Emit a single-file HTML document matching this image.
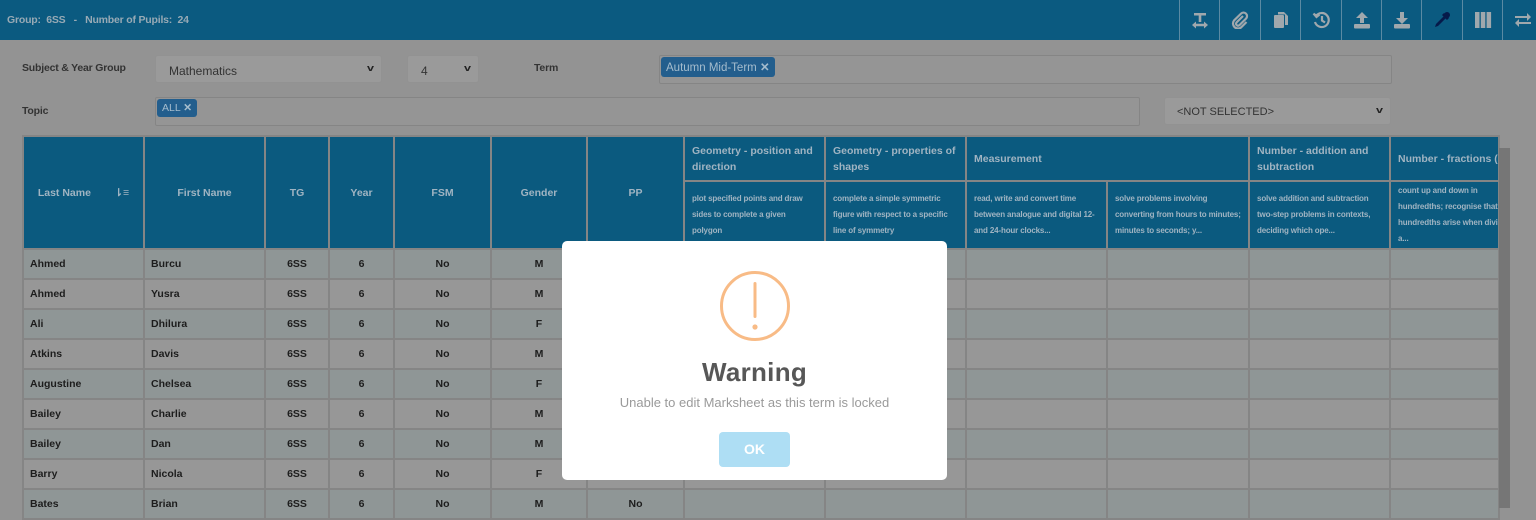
<!DOCTYPE html>
<html><head><meta charset="utf-8"><style>
*{box-sizing:border-box;margin:0;padding:0}
body{width:1536px;height:508px;overflow:hidden;background:#939393;font-family:"Liberation Sans",sans-serif;position:relative}
.top{position:absolute;left:0;top:0;width:1536px;height:40px;background:#0b5a80}
.top .t{position:absolute;left:7px;top:14px;font-size:10.5px;font-weight:bold;color:#98aab5;letter-spacing:-.2px}
.btn{position:absolute;top:0;width:40px;height:40px;border-left:1px solid #5b8aa3}
.btn svg{position:absolute;left:11px;top:11px}
.lbl{position:absolute;font-size:10.5px;font-weight:bold;color:#333;letter-spacing:-.2px}
.sel{position:absolute;background:#9a9a9a;border-radius:3px;font-size:12px;color:#333;padding:8px 13px;border:1px solid #929292}
.sel .ch{position:absolute;right:8px;top:7px;font-size:9px;color:#222;font-weight:bold;transform:scaleX(1.4)}
.inp{position:absolute;background:#959595;border:1px solid #858585;border-radius:2px}
.chip{position:absolute;background:#235e8d;color:#a5bccd;font-size:11.5px;border-radius:3px;padding:3px 5px}
table{position:absolute;left:22px;top:135px;border-collapse:collapse;table-layout:fixed;width:1476px}
td,th{border:2px solid #858585;overflow:hidden;white-space:nowrap}
th{background:#0b5a7f;color:#a0b4c2;font-size:10.5px;font-weight:bold}
th.l{text-align:left;padding:0 7px;white-space:normal;line-height:16px;vertical-align:middle}
th.s{font-size:8px;letter-spacing:-.15px;line-height:16px;font-weight:bold;text-align:left;padding:0 7px;white-space:normal}
td{height:30px;font-size:10.5px;font-weight:bold;color:#1d1d1d;text-align:center}
td.a{text-align:left;padding-left:6px}
tr.o td{background:#8f9696}tr.e td{background:#979797}
.sb{position:absolute;left:1499px;top:148px;width:11px;height:360px;background:#767676}
.modal{position:absolute;left:562px;top:241px;width:385px;height:239px;background:#fff;border-radius:5px;text-align:center}
</style></head><body>
<div class="top"><div class="t">Group:&nbsp;&nbsp;6SS&nbsp;&nbsp;&nbsp;-&nbsp;&nbsp;&nbsp;Number of Pupils:&nbsp;&nbsp;24</div>
<div class="btn" style="left:1179px"><svg width="18" height="18" viewBox="0 0 18 18" fill="#a0a8ad"><rect x="3" y="2" width="12" height="2.5"/><rect x="7.7" y="2" width="2.6" height="9"/><path d="M1 14 L5 10.5 V12.8 H13 V10.5 L17 14 L13 17.5 V15.2 H5 V17.5Z"/></svg></div>
<div class="btn" style="left:1219px"><svg width="18" height="18" viewBox="0 0 18 18" fill="none" stroke="#a0a8ad" stroke-width="2.2"><path d="M12 5 L5.5 11.5 a2 2 0 0 0 2.8 2.8 L15 7.6 a3.5 3.5 0 0 0 -5 -5 L3 9.5 a5 5 0 0 0 7 7 L15.5 11"/></svg></div>
<div class="btn" style="left:1260px"><svg width="18" height="18" viewBox="0 0 18 18" fill="#a0a8ad"><rect x="2" y="4" width="10" height="13" rx="1"/><path d="M6 1 H12 L16 5 V14 H13 V3.5 H6Z"/></svg></div>
<div class="btn" style="left:1300px"><svg width="18" height="18" viewBox="0 0 18 18" fill="none" stroke="#a0a8ad" stroke-width="2.2"><path d="M4 5 A7 7 0 1 1 3 11"/><path d="M1.5 2.5 L4.5 6 L7.5 3.5" fill="#a0a8ad"/><path d="M10 5 V9.5 L13 11.5"/></svg></div>
<div class="btn" style="left:1341px"><svg width="18" height="18" viewBox="0 0 18 18" fill="#a0a8ad"><path d="M9 1 L15 7 H11 V12 H7 V7 H3Z"/><rect x="1" y="13" width="16" height="4.5" rx="1"/></svg></div>
<div class="btn" style="left:1381px"><svg width="18" height="18" viewBox="0 0 18 18" fill="#a0a8ad"><path d="M7 1 H11 V7 H15 L9 13 L3 7 H7Z"/><rect x="1" y="13" width="16" height="4.5" rx="1"/></svg></div>
<div class="btn" style="left:1421px"><svg width="18" height="18" viewBox="0 0 18 18" fill="#061a4a"><path d="M11 2 L16 7 L14 9 L12.5 7.5 L5 15 L2 16 L3 13 L10.5 5.5 L9 4Z"/><circle cx="14" cy="4" r="3"/></svg></div>
<div class="btn" style="left:1462px"><svg width="18" height="18" viewBox="0 0 18 18" fill="#a0a8ad"><rect x="1" y="1" width="4.5" height="16"/><rect x="6.8" y="1" width="4.5" height="16"/><rect x="12.6" y="1" width="4.5" height="16"/></svg></div>
<div class="btn" style="left:1502px"><svg width="18" height="18" viewBox="0 0 18 18" fill="#a0a8ad"><path d="M1 5 H13 V2 L17 6 L13 10 V7 H1Z"/><path d="M17 13 H5 V16 L1 12 L5 8 V11 H17Z"/></svg></div>
</div>
<div class="lbl" style="left:22px;top:62px">Subject &amp; Year Group</div>
<div class="sel" style="left:155px;top:55px;width:227px;height:28px">Mathematics<span class="ch">v</span></div>
<div class="sel" style="left:407px;top:55px;width:72px;height:28px">4<span class="ch">v</span></div>
<div class="lbl" style="left:534px;top:62px">Term</div>
<div class="inp" style="left:659px;top:55px;width:733px;height:29px"></div>
<div class="chip" style="left:661px;top:57px">Autumn Mid-Term <b>✕</b></div>
<div class="lbl" style="left:22px;top:105px">Topic</div>
<div class="inp" style="left:155px;top:97px;width:985px;height:29px"></div>
<div class="chip" style="left:157px;top:99px;font-size:10.5px">ALL <b>✕</b></div>
<div class="sel" style="left:1164px;top:97px;width:227px;height:28px;font-size:11px;padding-left:12px">&lt;NOT SELECTED&gt;<span class="ch">v</span></div>
<table>
<colgroup><col style="width:121px"><col style="width:121px"><col style="width:64px"><col style="width:65px"><col style="width:97px"><col style="width:96px"><col style="width:97px"><col style="width:141px"><col style="width:141px"><col style="width:141px"><col style="width:142px"><col style="width:141px"><col style="width:109px"></colgroup>
<tr style="height:45px"><th rowspan="2">Last Name &nbsp;&nbsp;&nbsp;&nbsp;&nbsp;&nbsp;&nbsp;⇂≡</th><th rowspan="2">First Name</th><th rowspan="2">TG</th><th rowspan="2">Year</th><th rowspan="2">FSM</th><th rowspan="2">Gender</th><th rowspan="2">PP</th>
<th class="l">Geometry - position and direction</th><th class="l">Geometry - properties of shapes</th><th class="l" colspan="2">Measurement</th><th class="l">Number - addition and subtraction</th><th class="l" style="white-space:nowrap">Number - fractions (incl</th></tr>
<tr style="height:68px"><th class="s">plot specified points and draw sides to complete a given polygon</th><th class="s">complete a simple symmetric figure with respect to a specific line of symmetry</th><th class="s">read, write and convert time between analogue and digital 12- and 24-hour clocks...</th><th class="s">solve problems involving converting from hours to minutes; minutes to seconds; y...</th><th class="s">solve addition and subtraction two-step problems in contexts, deciding which ope...</th><th class="s" style="white-space:nowrap">count up and down in<br>hundredths; recognise that<br>hundredths arise when divid<br>a...</th></tr>
<tr class="o"><td class="a">Ahmed</td><td class="a">Burcu</td><td>6SS</td><td>6</td><td>No</td><td>M</td><td></td><td></td><td></td><td></td><td></td><td></td><td></td></tr>
<tr class="e"><td class="a">Ahmed</td><td class="a">Yusra</td><td>6SS</td><td>6</td><td>No</td><td>M</td><td></td><td></td><td></td><td></td><td></td><td></td><td></td></tr>
<tr class="o"><td class="a">Ali</td><td class="a">Dhilura</td><td>6SS</td><td>6</td><td>No</td><td>F</td><td></td><td></td><td></td><td></td><td></td><td></td><td></td></tr>
<tr class="e"><td class="a">Atkins</td><td class="a">Davis</td><td>6SS</td><td>6</td><td>No</td><td>M</td><td></td><td></td><td></td><td></td><td></td><td></td><td></td></tr>
<tr class="o"><td class="a">Augustine</td><td class="a">Chelsea</td><td>6SS</td><td>6</td><td>No</td><td>F</td><td></td><td></td><td></td><td></td><td></td><td></td><td></td></tr>
<tr class="e"><td class="a">Bailey</td><td class="a">Charlie</td><td>6SS</td><td>6</td><td>No</td><td>M</td><td></td><td></td><td></td><td></td><td></td><td></td><td></td></tr>
<tr class="o"><td class="a">Bailey</td><td class="a">Dan</td><td>6SS</td><td>6</td><td>No</td><td>M</td><td></td><td></td><td></td><td></td><td></td><td></td><td></td></tr>
<tr class="e"><td class="a">Barry</td><td class="a">Nicola</td><td>6SS</td><td>6</td><td>No</td><td>F</td><td></td><td></td><td></td><td></td><td></td><td></td><td></td></tr>
<tr class="o"><td class="a">Bates</td><td class="a">Brian</td><td>6SS</td><td>6</td><td>No</td><td>M</td><td>No</td><td></td><td></td><td></td><td></td><td></td><td></td></tr>
</table>
<div class="sb"></div>
<div class="modal">
<svg width="72" height="72" viewBox="0 0 72 72" style="position:absolute;left:157px;top:29px"><circle cx="36" cy="36" r="33.5" fill="none" stroke="#f8bb86" stroke-width="3"/><rect x="34.5" y="12" width="3" height="36" rx="1.5" fill="#f8bb86"/><circle cx="36" cy="57" r="2.6" fill="#f8bb86"/></svg>
<div style="position:absolute;left:0;width:385px;top:116px;font-size:26px;color:#575757;font-weight:bold;letter-spacing:.3px">Warning</div>
<div style="position:absolute;left:0;width:385px;top:154px;font-size:13px;color:#9a9a9a">Unable to edit Marksheet as this term is locked</div>
<div style="position:absolute;left:157px;top:191px;width:71px;height:35px;background:#aedef4;border-radius:4px;color:#fff;font-weight:bold;font-size:14px;line-height:35px">OK</div>
</div>
</body></html>
